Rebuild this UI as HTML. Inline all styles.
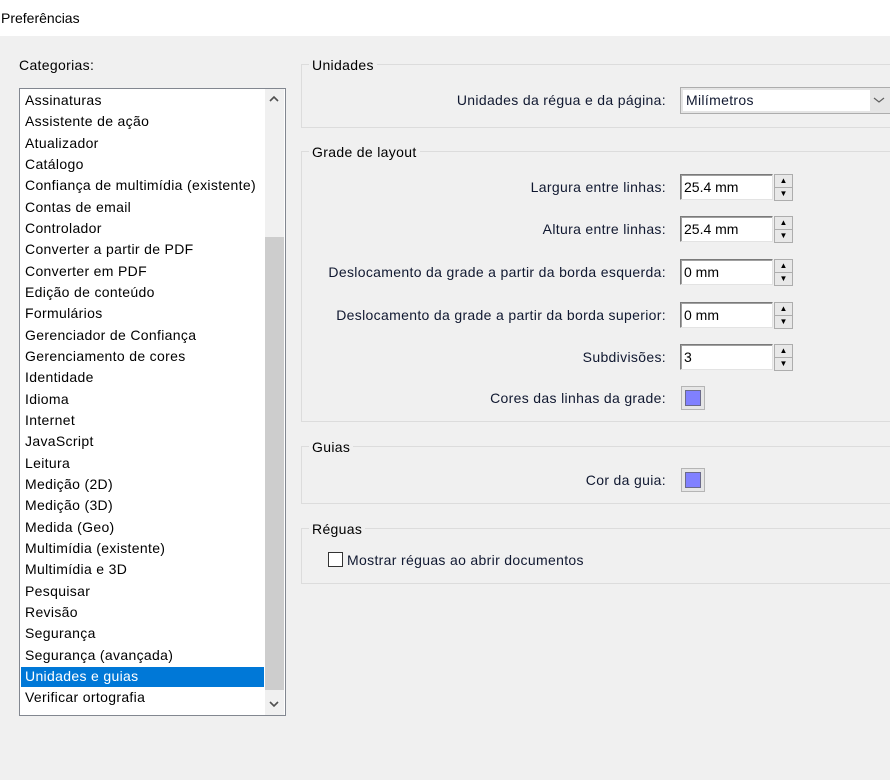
<!DOCTYPE html><html><head><style>
body{margin:0;width:890px;height:780px;background:#f0f0f0;font-family:"Liberation Sans",sans-serif;font-size:14px;letter-spacing:0.33px;color:#000;position:relative;overflow:hidden}
.a{position:absolute;white-space:nowrap}
.t{position:absolute;left:0;top:0;width:890px;height:36px;background:#fff}
.grp{position:absolute;left:301px;width:600px;border:1px solid #dcdcdc;border-right:none}
.gl{position:absolute;left:309px;background:#f0f0f0;padding:0 3px;line-height:16px}
.lab{position:absolute;right:224px;line-height:16px;color:#101830}
.inp{position:absolute;left:680px;width:88px;height:24px;background:#fff;border:1px solid #7a7a7a;border-right-color:#e3e3e3;border-bottom-color:#e3e3e3;box-shadow:inset 1px 1px 0 #a0a0a0;line-height:24px;padding-left:3px;box-sizing:content-box;letter-spacing:0}
.sp{position:absolute;left:774px;width:17px;height:12px;background:#e8e8e8;border:1px solid #adadad;font-size:8px;text-align:center;line-height:12px;color:#000;letter-spacing:0}
.sw{position:absolute;left:681px;width:22px;height:22px;border:1px solid #b5b5b5;background:#e6e6e6}
.sw i{position:absolute;left:3px;top:3px;width:14px;height:14px;background:#8080ff;border:1px solid #6a6a8a}
.li{position:absolute;left:25px;line-height:20px}
</style></head><body>
<div class="t"></div>
<div class="a" style="left:1px;top:10px;line-height:16px;letter-spacing:0">Preferências</div>
<div class="a" style="left:19px;top:57px;line-height:16px">Categorias:</div>
<div class="a" style="left:19px;top:88px;width:265px;height:626px;background:#fff;border:1px solid #828790"></div>
<div class="a" style="left:265px;top:89px;width:19px;height:626px;background:#f0f0f0"></div>
<div class="a" style="left:265px;top:237px;width:19px;height:453px;background:#cdcdcd"></div>
<svg class="a" style="left:268px;top:95px" width="12" height="8"><path d="M2 6L6 2L10 6" stroke="#505050" stroke-width="1.6" fill="none"/></svg>
<svg class="a" style="left:268px;top:700px" width="12" height="8"><path d="M2 2L6 6L10 2" stroke="#505050" stroke-width="1.6" fill="none"/></svg>
<div class="a" style="left:21px;top:667px;width:243px;height:20px;background:#0078d7"></div>
<div class="li" style="top:90px">Assinaturas</div>
<div class="li" style="top:111px">Assistente de ação</div>
<div class="li" style="top:133px">Atualizador</div>
<div class="li" style="top:154px">Catálogo</div>
<div class="li" style="top:175px">Confiança de multimídia (existente)</div>
<div class="li" style="top:197px">Contas de email</div>
<div class="li" style="top:218px">Controlador</div>
<div class="li" style="top:239px">Converter a partir de PDF</div>
<div class="li" style="top:261px">Converter em PDF</div>
<div class="li" style="top:282px">Edição de conteúdo</div>
<div class="li" style="top:303px">Formulários</div>
<div class="li" style="top:325px">Gerenciador de Confiança</div>
<div class="li" style="top:346px">Gerenciamento de cores</div>
<div class="li" style="top:367px">Identidade</div>
<div class="li" style="top:389px">Idioma</div>
<div class="li" style="top:410px">Internet</div>
<div class="li" style="top:431px">JavaScript</div>
<div class="li" style="top:453px">Leitura</div>
<div class="li" style="top:474px">Medição (2D)</div>
<div class="li" style="top:495px">Medição (3D)</div>
<div class="li" style="top:517px">Medida (Geo)</div>
<div class="li" style="top:538px">Multimídia (existente)</div>
<div class="li" style="top:559px">Multimídia e 3D</div>
<div class="li" style="top:581px">Pesquisar</div>
<div class="li" style="top:602px">Revisão</div>
<div class="li" style="top:623px">Segurança</div>
<div class="li" style="top:645px">Segurança (avançada)</div>
<div class="li" style="top:666px;color:#fff">Unidades e guias</div>
<div class="li" style="top:687px">Verificar ortografia</div>

<div class="grp" style="top:64px;height:62px"></div><div class="gl" style="top:57px">Unidades</div>
<div class="grp" style="top:151px;height:269px"></div><div class="gl" style="top:144px">Grade de layout</div>
<div class="grp" style="top:446px;height:56px"></div><div class="gl" style="top:439px">Guias</div>
<div class="grp" style="top:528px;height:54px"></div><div class="gl" style="top:521px">Réguas</div>

<div class="lab" style="top:92px">Unidades da régua e da página:</div>
<div class="a" style="left:680px;top:87px;width:212px;height:25px;border:1px solid #adadad;background:#e5e5e5"></div>
<div class="a" style="left:683px;top:90px;width:184px;height:21px;background:#fff;line-height:21px;padding-left:3px;color:#101830">Milímetros</div>
<svg class="a" style="left:873px;top:96px" width="12" height="8"><path d="M1 2L6 6L11 2" stroke="#606060" stroke-width="1.2" fill="none"/></svg>

<div class="lab" style="top:179px">Largura entre linhas:</div>
<div class="inp" style="top:174px">25.4 mm</div><div class="sp" style="top:174px">▲</div><div class="sp" style="top:187px">▼</div>
<div class="lab" style="top:221px">Altura entre linhas:</div>
<div class="inp" style="top:216px">25.4 mm</div><div class="sp" style="top:216px">▲</div><div class="sp" style="top:229px">▼</div>
<div class="lab" style="top:264px">Deslocamento da grade a partir da borda esquerda:</div>
<div class="inp" style="top:259px">0 mm</div><div class="sp" style="top:259px">▲</div><div class="sp" style="top:272px">▼</div>
<div class="lab" style="top:307px">Deslocamento da grade a partir da borda superior:</div>
<div class="inp" style="top:302px">0 mm</div><div class="sp" style="top:302px">▲</div><div class="sp" style="top:315px">▼</div>
<div class="lab" style="top:349px">Subdivisões:</div>
<div class="inp" style="top:344px">3</div><div class="sp" style="top:344px">▲</div><div class="sp" style="top:357px">▼</div>
<div class="lab" style="top:390px">Cores das linhas da grade:</div>
<div class="sw" style="top:386px"><i></i></div>
<div class="lab" style="top:472px">Cor da guia:</div>
<div class="sw" style="top:468px"><i></i></div>

<div class="a" style="left:328px;top:552px;width:13px;height:13px;border:1px solid #333;background:#fff"></div>
<div class="a" style="left:347px;top:552px;line-height:16px;color:#101830">Mostrar réguas ao abrir documentos</div>
</body></html>
